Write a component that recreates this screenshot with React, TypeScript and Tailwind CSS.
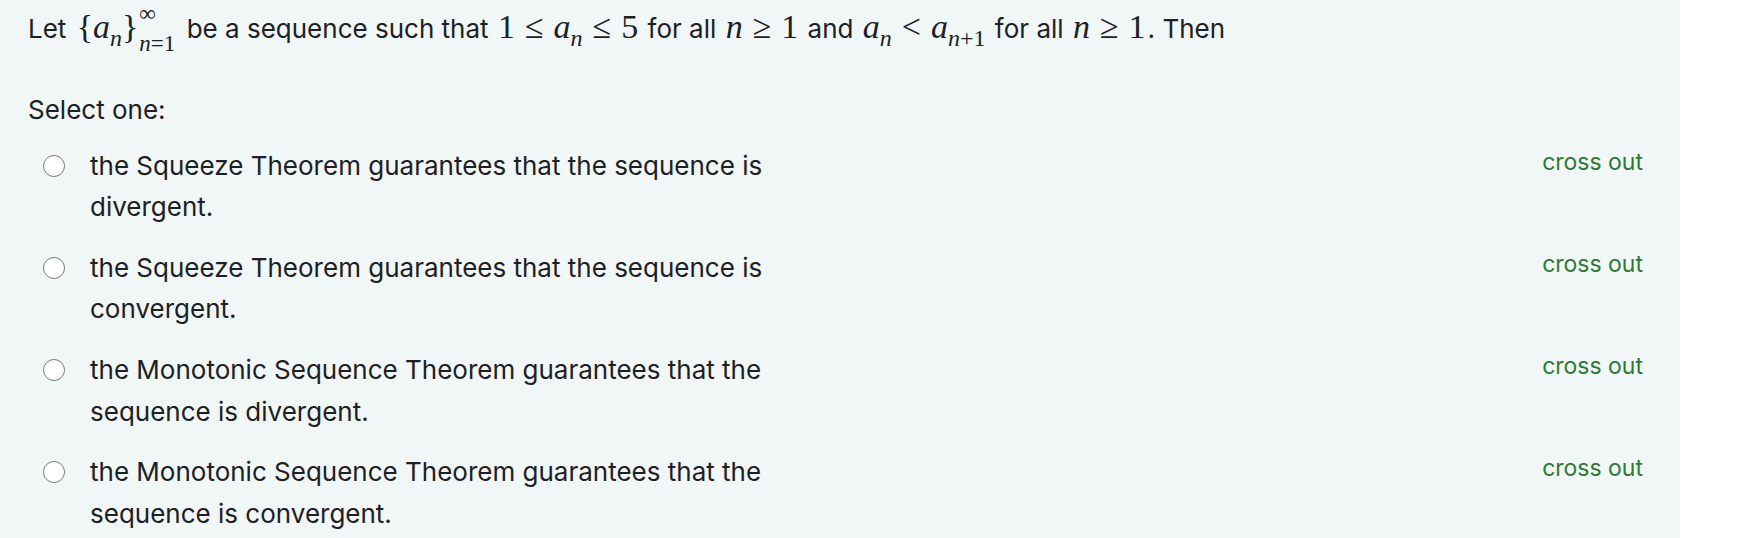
import type { ReactNode } from "react";

const options = [
  "the Squeeze Theorem guarantees that the sequence is divergent.",
  "the Squeeze Theorem guarantees that the sequence is convergent.",
  "the Monotonic Sequence Theorem guarantees that the sequence is divergent.",
  "the Monotonic Sequence Theorem guarantees that the sequence is convergent.",
];

function M({ children }: { children: ReactNode }) {
  return (
    <span className="px-[2px] font-['Liberation_Serif',serif] text-[34px] leading-none whitespace-nowrap">
      {children}
    </span>
  );
}

function V({ children }: { children: ReactNode }) {
  return <span className="italic">{children}</span>;
}

function Sub({ children }: { children: ReactNode }) {
  return <span className="text-[24px] align-[-8px]">{children}</span>;
}

function Rel({ children }: { children: ReactNode }) {
  return <span className="mx-[10px]">{children}</span>;
}

export default function App() {
  return (
    <div className="w-[1762px] h-[538px] bg-white font-['Inter',sans-serif] text-[#1d2125] overflow-hidden">
      <div className="w-[1680px] min-h-[538px] bg-[#f1f6f6] pl-[28px] pr-[37px] pt-[2px]">
        <p className="h-[42px] text-[26px] leading-[1.6] whitespace-nowrap">
          Let{" "}
          <M>
            <span className="ml-[1px]">{"{"}</span>
            <V>a</V>
            <Sub>
              <V>n</V>
            </Sub>
            <span>{"}"}</span>
            <span className="inline-flex flex-col gap-[7px] text-[23px] leading-none align-[17px] ml-[1px] mr-[2px]">
              <span>∞</span>
              <span>
                <V>n</V>=1
              </span>
            </span>
          </M>{" "}
          be a sequence such that{" "}
          <M>
            1<Rel>≤</Rel>
            <V>a</V>
            <Sub>
              <V>n</V>
            </Sub>
            <Rel>≤</Rel>5
          </M>{" "}
          for all{" "}
          <M>
            <V>n</V>
            <Rel>≥</Rel>1
          </M>{" "}
          and{" "}
          <M>
            <V>a</V>
            <Sub>
              <V>n</V>
            </Sub>
            <Rel>{"<"}</Rel>
            <V>a</V>
            <Sub>
              <V>n</V>+1
            </Sub>
          </M>{" "}
          for all{" "}
          <M>
            <V>n</V>
            <Rel>≥</Rel>1
          </M>
          . Then
        </p>

        <p className="mt-[45px] text-[26px] leading-[1.6]">Select one:</p>

        <div className="mt-[14px] flex flex-col gap-[19px]">
          {options.map((text, i) => (
            <div key={i} className="flex items-start">
              <div className="w-[62px] shrink-0">
                <span className="block ml-[15px] mt-[10px] w-[22px] h-[22px] rounded-full border-[1.5px] border-[#76797c] bg-white" />
              </div>
              <div className="w-[720px] text-[26px] leading-[1.6]">{text}</div>
              <button className="ml-auto text-[23px] leading-[1.5] text-[#2e7a34]">
                cross out
              </button>
            </div>
          ))}
        </div>
      </div>
    </div>
  );
}
